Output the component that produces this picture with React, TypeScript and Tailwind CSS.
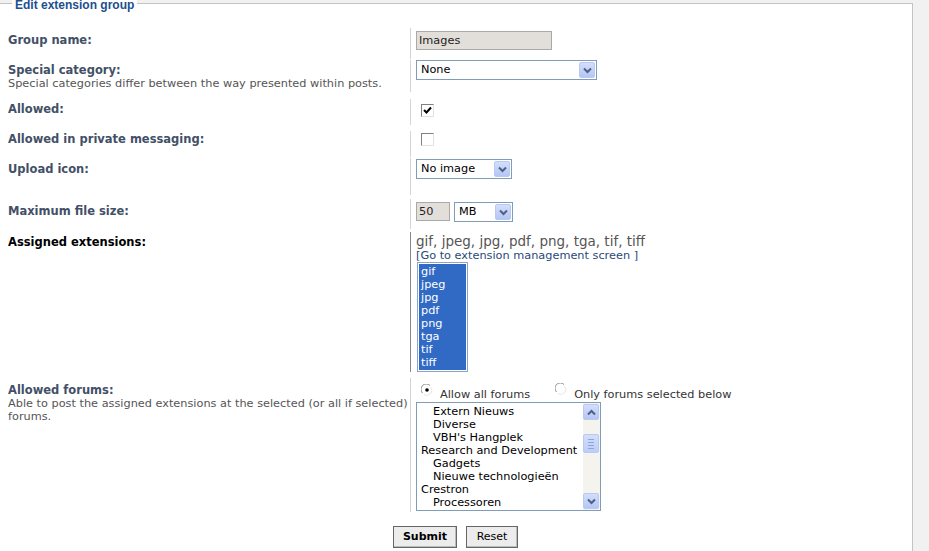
import React from "react";

const font = { fontFamily: '"DejaVu Sans", Verdana, sans-serif' };

function Chevron({ dir = "down" }: { dir?: "down" | "up" }) {
  return (
    <svg width="9" height="7" viewBox="0 0 9 7">
      {dir === "down" ? (
        <path d="M1 1.5 L4.5 5 L8 1.5" fill="none" stroke="#4d6185" strokeWidth="2" />
      ) : (
        <path d="M1 5.5 L4.5 2 L8 5.5" fill="none" stroke="#4d6185" strokeWidth="2" />
      )}
    </svg>
  );
}

function Dropdown({ value, className }: { value: string; className: string }) {
  return (
    <div className={`flex h-[20px] border border-[#7f9db9] bg-white ${className}`}>
      <span className="flex-1 pl-[4px] text-[11.3px] leading-[18px] text-black">{value}</span>
      <span className="m-[1px] flex w-[16px] items-center justify-center rounded-[2px] border border-[#b9c9f3] bg-gradient-to-b from-[#d3defb] to-[#b4c6f4]">
        <Chevron />
      </span>
    </div>
  );
}

function Checkbox({ checked }: { checked?: boolean }) {
  return (
    <span className="flex h-[13px] w-[13px] items-center justify-center border-t border-l border-r border-b border-t-[#808080] border-l-[#808080] border-r-[#e4e2dc] border-b-[#e4e2dc] bg-white">
      {checked && (
        <svg width="9" height="9" viewBox="0 0 9 9">
          <path d="M1 4 L3.5 6.5 L8 1.5" fill="none" stroke="#000" strokeWidth="2" />
        </svg>
      )}
    </span>
  );
}

function Radio({ checked }: { checked?: boolean }) {
  return (
    <svg width="12" height="12" viewBox="0 0 12 12">
      <circle cx="6" cy="6" r="5.5" fill="#fff" />
      <path d="M1.5 9 A5 5 0 0 1 9 1.5" fill="none" stroke="#8a8a8a" strokeWidth="1" />
      <path d="M9.5 3 A5 5 0 0 1 3 10.5" fill="none" stroke="#e6e6e6" strokeWidth="1" />
      {checked && <circle cx="6" cy="6" r="1.8" fill="#000" />}
    </svg>
  );
}

const extensions = ["gif", "jpeg", "jpg", "pdf", "png", "tga", "tif", "tiff"];

const forums: [string, boolean][] = [
  ["Extern Nieuws", true],
  ["Diverse", true],
  ["VBH's Hangplek", true],
  ["Research and Development", false],
  ["Gadgets", true],
  ["Nieuwe technologieën", true],
  ["Crestron", false],
  ["Processoren", true],
];

function Row({
  className,
  label,
  desc,
  labelPad,
  ddPad,
  dark,
  children,
}: {
  className: string;
  label: string;
  desc?: React.ReactNode;
  labelPad: string;
  ddPad: string;
  dark?: boolean;
  children: React.ReactNode;
}) {
  return (
    <div className={`flex ${className}`}>
      <div className={`w-[410px] pl-[8px] ${labelPad}`}>
        <div className={`whitespace-nowrap text-[11.5px] font-bold leading-[13px] ${dark ? "text-black" : "text-[#425067]"}`}>{label}</div>
        {desc && <div className="whitespace-nowrap text-[11.3px] leading-[13px] text-[#555]">{desc}</div>}
      </div>
      <div className={`border-l pl-[5px] ${dark ? "border-[#888]" : "border-[#d4d4d4]"} ${ddPad}`}>{children}</div>
    </div>
  );
}

export default function App() {
  return (
    <div className="h-[551px] w-[929px] overflow-hidden bg-[#f1f1f1]" style={font}>
      <fieldset className="mt-[-5px] h-[560px] w-[913px] border-t border-r border-[#c4c4c4] bg-white">
        <legend
          className="ml-[12px] bg-white px-[3px] pt-[4px] text-[12px] font-bold leading-[12px] text-[#1b4f8f]"
          style={{ fontFamily: '"Liberation Sans", Arial, sans-serif' }}
        >
          Edit extension group
        </legend>

        <Row className="mt-[17px] h-[31px]" label="Group name:" labelPad="pt-[6px]" ddPad="pt-[3px]">
          <div className="h-[19px] w-[136px] border border-[#a9a9a9] bg-[#e2ded9] pl-[2px] text-[11.3px] leading-[17px] text-[#222]">
            Images
          </div>
        </Row>

        <Row
          className="mt-[1px] h-[32px]"
          label="Special category:"
          desc="Special categories differ between the way presented within posts."
          labelPad="pt-[4px]"
          ddPad="pt-0"
        >
          <Dropdown value="None" className="w-[181px]" />
        </Row>

        <Row className="mt-[7px] h-[26px]" label="Allowed:" labelPad="pt-[4px]" ddPad="pt-[5px] pl-[10px]">
          <Checkbox checked />
        </Row>

        <Row className="mt-[6px] h-[26px]" label="Allowed in private messaging:" labelPad="pt-[2px]" ddPad="pt-[2px] pl-[10px]">
          <Checkbox />
        </Row>

        <Row className="mt-[1px] h-[37px]" label="Upload icon:" labelPad="pt-[5px]" ddPad="pt-[1px]">
          <Dropdown value="No image" className="w-[96px]" />
        </Row>

        <Row className="mt-[4px] h-[30px]" label="Maximum file size:" labelPad="pt-[6px]" ddPad="pt-[3px]">
          <div className="flex gap-[4px]">
            <div className="h-[19px] w-[34px] border border-[#a9a9a9] bg-[#e2ded9] pl-[2px] text-[11.3px] leading-[17px] text-[#222]">
              50
            </div>
            <Dropdown value="MB" className="h-[19px] w-[59px]" />
          </div>
        </Row>

        <Row className="mt-[3px] h-[140px]" label="Assigned extensions:" dark labelPad="pt-[4px]" ddPad="pt-[2px]">
          <div className="text-[13.5px] leading-[15px] text-[#555]">{extensions.join(", ")}</div>
          <div className="text-[11.3px] leading-[13px] text-[#2a4a78]">[Go to extension management screen ]</div>
          <div className="ml-[1px] w-[51px] border border-[#8ea4c6] bg-white p-[1px]">
            <div className="bg-[#316ac5] py-[1px]">
              {extensions.map((e) => (
                <div key={e} className="pl-[2px] text-[11.3px] leading-[13px] text-white">
                  {e}
                </div>
              ))}
            </div>
          </div>
        </Row>

        <Row
          className="mt-[6px] h-[134px]"
          label="Allowed forums:"
          desc={
            <>
              Able to post the assigned extensions at the selected (or all if selected)
              <br />
              forums.
            </>
          }
          labelPad="pt-[6px]"
          ddPad="pt-[5px]"
        >
          <div className="flex items-start text-[11.3px] leading-[13px] text-[#333]">
            <span className="ml-[5px] mt-[1px]">
              <Radio checked />
            </span>
            <span className="ml-[7px] mt-[5px]">Allow all forums</span>
            <span className="ml-[25px]">
              <Radio />
            </span>
            <span className="ml-[7px] mt-[5px]">Only forums selected below</span>
          </div>
          <div className="mt-[1px] flex h-[109px] w-[185px] border border-[#7f9db9] bg-white">
            <div className="flex-1 overflow-hidden pt-[2px] pl-[4px]">
              {forums.map(([name, indent]) => (
                <div key={name} className={`whitespace-nowrap text-[11.3px] leading-[13px] text-black ${indent ? "pl-[12px]" : ""}`}>
                  {name}
                </div>
              ))}
            </div>
            <div className="flex w-[17px] flex-col bg-[#f4f3ee] py-[1px] pr-[1px]">
              <span className="flex h-[16px] items-center justify-center rounded-[2px] border border-[#b9c9f3] bg-gradient-to-b from-[#d3defb] to-[#b4c6f4]">
                <Chevron dir="up" />
              </span>
              <span className="mt-[14px] flex h-[19px] flex-col items-center justify-center gap-[2px] rounded-[2px] border border-[#b9c9f3] bg-gradient-to-b from-[#d3defb] to-[#bccdf6]">
                <span className="h-px w-[6px] bg-[#8ea3d8]" />
                <span className="h-px w-[6px] bg-[#8ea3d8]" />
                <span className="h-px w-[6px] bg-[#8ea3d8]" />
                <span className="h-px w-[6px] bg-[#8ea3d8]" />
              </span>
              <span className="flex-1" />
              <span className="flex h-[16px] items-center justify-center rounded-[2px] border border-[#b9c9f3] bg-gradient-to-b from-[#d3defb] to-[#b4c6f4]">
                <Chevron />
              </span>
            </div>
          </div>
        </Row>

        <div className="mt-[14px] flex gap-[9px] pl-[393px]">
          <button className="h-[22px] w-[64px] border border-[#666] bg-[#ececec] text-[11px] font-bold text-black shadow-[inset_-1px_-1px_0_#bbb]">
            Submit
          </button>
          <button className="h-[22px] w-[52px] border border-[#666] bg-[#ececec] text-[11px] text-black shadow-[inset_-1px_-1px_0_#bbb]">
            Reset
          </button>
        </div>
      </fieldset>
    </div>
  );
}
